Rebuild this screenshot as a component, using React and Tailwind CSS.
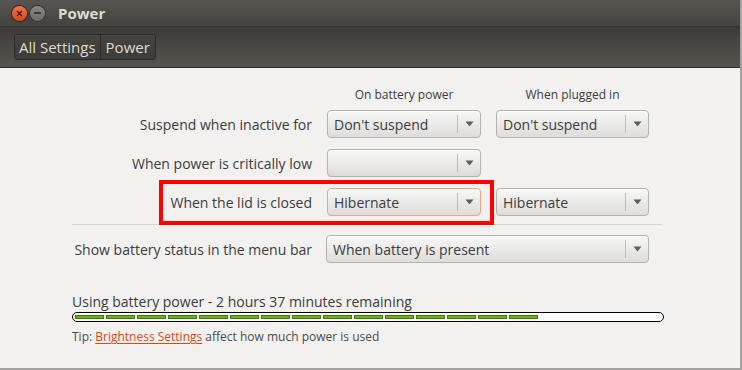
import React from 'react';

const font = { fontFamily: '"Open Sans", "DejaVu Sans", sans-serif' };

const Arrow = () => (
  <svg width="9" height="6" viewBox="0 0 9 6" className="block">
    <path d="M0.5 0.5 L8.5 0.5 L4.5 5.5 Z" fill="#5e5e5e" />
  </svg>
);

const Combo = ({ value, focused, className = '' }) => (
  <div
    className={`flex h-[28px] items-stretch rounded-[4px] border bg-gradient-to-b from-[#f7f7f6] to-[#dedddb] shadow-[inset_0_1px_0_#ffffff] ${
      focused ? 'border-[#e9a58a]' : 'border-[#b3b2ae]'
    } ${className}`}
  >
    <div className="flex flex-1 items-center whitespace-nowrap pl-[6px] text-[14px] text-[#3c3c3c]">{value}</div>
    <div className="my-[4px] w-px bg-[#bdbcb8]" />
    <div className="flex w-[22px] items-center justify-center">
      <Arrow />
    </div>
  </div>
);

const Label = ({ children }) => (
  <div className="flex h-[28px] items-center justify-end whitespace-nowrap text-[14px] text-[#3c3c3c]">{children}</div>
);

export default function App() {
  const segments = Array.from({ length: 15 });
  return (
    <div className="h-[370px] w-[742px] overflow-hidden bg-[#a3a29e]" style={font}>
      <div className="flex h-[368px] w-[740px] flex-col bg-[#f2f1f0]">
        {/* title bar */}
        <div className="flex h-[27px] items-center border-b border-[#35342f] bg-gradient-to-b from-[#57554f] to-[#45433e] pl-[12px]">
          <div className="flex h-[15px] w-[15px] items-center justify-center rounded-full bg-gradient-to-b from-[#f3754a] to-[#d9461c] shadow-[0_0_0_1px_#3a2a22]">
            <svg width="7" height="7" viewBox="0 0 7 7">
              <path d="M1 1 L6 6 M6 1 L1 6" stroke="#3a1a10" strokeWidth="1.3" />
            </svg>
          </div>
          <div className="ml-[3px] flex h-[15px] w-[15px] items-center justify-center rounded-full bg-gradient-to-b from-[#8a8985] to-[#6b6a66] shadow-[0_0_0_1px_#35342f]">
            <div className="h-[1.5px] w-[7px] bg-[#3c3b37]" />
          </div>
          <div className="ml-[13px] text-[15px] font-bold text-[#dfdbd2]">Power</div>
        </div>

        {/* toolbar */}
        <div className="flex h-[41px] items-center border-b border-[#2e2d29] bg-gradient-to-b from-[#3c3b37] to-[#57554f] pl-[14px]">
          <div className="flex h-[26px] overflow-hidden rounded-[3px] border border-[#2b2a26] text-[15px] text-[#dfdbd2]">
            <div className="flex items-center bg-gradient-to-b from-[#45443f] to-[#3d3c38] px-[4px]">All Settings</div>
            <div className="w-px bg-[#2b2a26]" />
            <div className="flex items-center bg-gradient-to-b from-[#45443f] to-[#3d3c38] px-[5px]">Power</div>
          </div>
        </div>

        {/* content */}
        <div className="relative flex-1 pl-[72px] pr-[76px]">
          <div className="grid grid-cols-[240px_154px_153px] gap-x-[15px] pt-[18px]">
            <div />
            <div className="h-[24px] text-center text-[12px] text-[#3c3c3c]">On battery power</div>
            <div className="h-[24px] text-center text-[12px] text-[#3c3c3c]">When plugged in</div>

            <Label>Suspend when inactive for</Label>
            <Combo value="Don't suspend" />
            <Combo value="Don't suspend" />

            <div className="col-span-3 h-[11px]" />
            <Label>When power is critically low</Label>
            <Combo value="" />
            <div />

            <div className="col-span-3 h-[11px]" />
            <Label>When the lid is closed</Label>
            <Combo value="Hibernate" focused />
            <Combo value="Hibernate" />
          </div>

          <div className="mt-[8px] h-px w-[590px] bg-[#d6d5d2]" />

          <div className="mt-[10px] grid grid-cols-[240px_323px] gap-x-[14px]">
            <Label>Show battery status in the menu bar</Label>
            <Combo value="When battery is present" />
          </div>

          <div className="mt-[30px] text-[14px] leading-[18px] text-[#3c3c3c]">
            Using battery power - 2 hours 37 minutes remaining
          </div>
          <div className="mt-[1px] flex h-[10px] w-[592px] items-center gap-[2px] rounded-full border-[1.5px] border-black bg-white px-[2px]">
            {segments.map((_, i) => (
              <div key={i} className="h-[4px] w-[29px] border border-[#3e7b06] bg-[#6bb11b]" />
            ))}
          </div>
          <div className="mt-[6px] text-[12px] text-[#4c4c4c]">
            Tip: <span className="text-[#dd4814] underline underline-offset-2">Brightness Settings</span> affect how much power is used
          </div>

          {/* highlight box */}
          <div className="pointer-events-none absolute left-[159px] top-[112px] h-[45px] w-[335px] border-[4px] border-[#ff0000]" />
        </div>
      </div>
    </div>
  );
}
